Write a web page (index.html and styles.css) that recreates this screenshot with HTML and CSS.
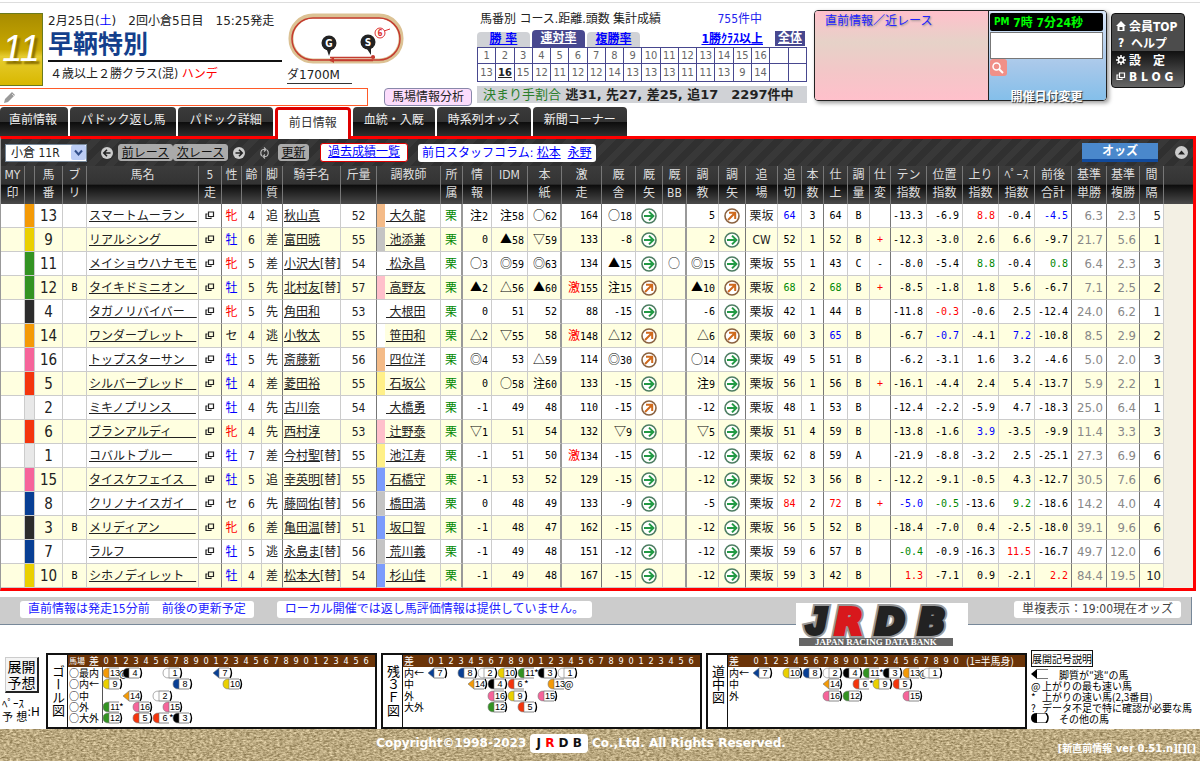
FILE: index.html
```html
<!DOCTYPE html>
<html lang="ja">
<head>
  <meta charset="UTF-8">
  <title>早鞆特別 - 前日情報</title>
  <link rel="stylesheet" href="styles.css">
</head>
<body>
  <svg class="defs" width="0" height="0" aria-hidden="true">
    <symbol id="i-flat" viewBox="0 0 16 16">
      <circle cx="8" cy="8" r="7" fill="#fff" stroke="#4d7d62" stroke-width="1.6"/>
      <path d="M3 8h9M8 3.6L12.4 8 8 12.4" fill="none" stroke="#229a45" stroke-width="2"/>
    </symbol>
    <symbol id="i-up" viewBox="0 0 16 16">
      <circle cx="8" cy="8" r="7" fill="#fff" stroke="#8a6240" stroke-width="1.6"/>
      <path d="M4 12l7-7M5 4.8h6.2V11" fill="none" stroke="#cf6a1d" stroke-width="2"/>
    </symbol>
    <symbol id="i-win" viewBox="0 0 10 9">
      <path d="M3.5 1h5v4.5h-5zM2.5 3H1v4.5h5V6.5" fill="none" stroke="currentColor" stroke-width="1.2"/>
    </symbol>
    <symbol id="i-circle-left" viewBox="0 0 12 12">
      <circle cx="6" cy="6" r="6" fill="#ccc"/>
      <path d="M9.5 6H3M6 2.8L2.8 6 6 9.2" fill="none" stroke="#222" stroke-width="1.6"/>
    </symbol>
    <symbol id="i-circle-right" viewBox="0 0 12 12">
      <circle cx="6" cy="6" r="6" fill="#ccc"/>
      <path d="M2.5 6H9M6 2.8L9.2 6 6 9.2" fill="none" stroke="#222" stroke-width="1.6"/>
    </symbol>
  </svg>

  <header class="page-head">
    <div class="race">
      <div class="race-top">
        <div class="race-no">11</div>
        <div class="race-info">
          <div class="race-date">2月25日(<span class="blue">土</span>)　2回小倉5日目　15:25発走</div>
          <h1>早鞆特別</h1>
          <div class="race-cond">４歳以上２勝クラス(混) <span class="red">ハンデ</span></div>
        </div>
        <div class="course">
          <svg width="118" height="52" viewBox="0 0 118 52">
            <rect x="4" y="3" width="110" height="45" rx="22" fill="none" stroke="#dcc294" stroke-width="5"/>
            <rect x="5" y="5" width="108" height="42" rx="21" fill="none" stroke="#c43c30" stroke-width="1.5"/>
            <path d="M43 44.500H88M43 47.500H86" stroke="#c43c30" stroke-width="1.5"/>
            <path d="M42 47l5-3v6z" fill="#c43c30"/>
            <circle cx="86" cy="44" r="2" fill="#c43c30"/>
            <path d="M42 43l-3-9h6zM84 42l-6-9 6-1z" fill="#222"/>
            <circle cx="42" cy="30" r="7.500" fill="#222"/>
            <circle cx="81" cy="29" r="7.500" fill="#222"/>
            <circle cx="93" cy="20" r="5" fill="#fff" stroke="#d33"/>
            <path d="M97 18l6-2" stroke="#d33"/>
            <text class="pin" x="42" y="34">G</text>
            <text class="pin" x="81" y="33">S</text>
            <text class="pin-no" x="93" y="23">6</text>
          </svg>
          <div class="distance">ダ1700M　</div>
        </div>
      </div>
      <div class="memo">
        <span class="memo-box">
          <svg width="14" height="14" viewBox="0 0 14 14"><path d="M1 13l1-4 7-7 3 3-7 7z" fill="#999"/><path d="M9 4l2 2" stroke="#ddd"/></svg>
          <input type="text" aria-label="メモ">
        </span>
        <button class="btn-baba" type="button">馬場情報分析</button>
      </div>
    </div>

    <section class="stats">
      <div class="stats-head"><span>馬番別 コース.距離.頭数 集計成績</span><span class="count">755件中</span></div>
      <div class="stats-tabs">
        <a href="#">勝 率</a>
        <a href="#" class="on">連対率</a>
        <a href="#">複勝率</a>
        <a href="#" class="plain">1勝ｸﾗｽ以上</a>
        <a href="#" class="all">全体</a>
      </div>
      <table class="stats-table">
        <tr><td>1</td><td>2</td><td>3</td><td>4</td><td>5</td><td>6</td><td>7</td><td>8</td><td>9</td><td>10</td><td>11</td><td>12</td><td>13</td><td>14</td><td>15</td><td>16</td><td></td><td></td></tr>
        <tr><td>13</td><td><b>16</b></td><td>15</td><td>12</td><td>11</td><td>12</td><td>12</td><td>14</td><td>13</td><td>13</td><td>13</td><td>11</td><td>11</td><td>13</td><td>9</td><td>14</td><td></td><td></td></tr>
      </table>
      <div class="kimarite"><span class="green">決まり手割合</span> 逃31, 先27, 差25, 追17　2297件中</div>
    </section>

    <section class="near">
      <div class="near-race">直前情報／近レース</div>
      <div class="near-side">
        <div class="clock"><small>PM</small> 7時 7分24秒</div>
        <input type="text" aria-label="検索">
        <button class="search" type="button" aria-label="検索する">
          <svg width="16" height="16" viewBox="0 0 16 16"><circle cx="6.500" cy="6.500" r="3.500" fill="none" stroke="#fff" stroke-width="1.500"/><path d="M9 9l4 4" stroke="#fff" stroke-width="2"/></svg>
        </button>
        <a href="#" class="change-date">開催日付変更</a>
      </div>
    </section>

    <nav class="menu">
      <a href="#"><svg width="10" height="10" viewBox="0 0 10 10"><path d="M0 5l5-5 5 5H8.500v5h-7V5zM3.500 6v3h3V6z" fill="#fff" fill-rule="evenodd"/></svg>会員TOP</a>
      <a href="#"><b>?</b>ヘルプ</a>
      <a href="#"><svg width="10" height="10" viewBox="0 0 10 10"><path d="M5 0v10M0 5h10M1.500 1.500l7 7M8.500 1.500l-7 7" stroke="#fff" stroke-width="1.500"/><circle cx="5" cy="5" r="2.500" fill="#222" stroke="#fff" stroke-width="1.500"/></svg>設　定</a>
      <a href="#"><svg width="10" height="9"><use href="#i-win"/></svg>B L O G</a>
    </nav>
  </header>

  <nav class="tabs">
    <a href="#">直前情報</a>
    <a href="#">パドック返し馬</a>
    <a href="#">パドック詳細</a>
    <a href="#" class="active">前日情報</a>
    <a href="#">血統・入厩</a>
    <a href="#">時系列オッズ</a>
    <a href="#">新聞コーナー</a>
  </nav>

  <main class="panel">
    <div class="toolbar">
      <span class="race-select">
        <select aria-label="レース選択"><option>小倉 11R</option></select>
        <svg width="15" height="15" viewBox="0 0 15 15"><rect width="15" height="15" rx="2" fill="#bccdf5"/><path d="M4 5.500l3.500 4 3.500-4" fill="none" stroke="#33508c" stroke-width="2"/></svg>
      </span>
      <span class="race-move">
        <svg width="12" height="12"><use href="#i-circle-left"/></svg>
        <span><button type="button">前レース</button><button type="button">次レース</button></span>
        <svg width="12" height="12"><use href="#i-circle-right"/></svg>
      </span>
      <svg width="11" height="12" viewBox="0 0 11 12"><path d="M6 2.500H4A2.500 3.500 0 0 0 3 9M5 9.500h2A2.500 3.500 0 0 0 8 3M5 .5l2 2-2 2M6 7.500l-2 2 2 2" fill="none" stroke="#bbb" stroke-width="1.200"/></svg>
      <button type="button" class="reload">更新</button>
      <a href="#" class="past">過去成績一覧</a>
      <span class="column">前日スタッフコラム: <a href="#">松本</a>&nbsp; <a href="#">永野</a></span>
      <button type="button" class="odds">オッズ</button>
      <svg width="13" height="13" viewBox="0 0 13 13"><circle cx="6.500" cy="6.500" r="6.500" fill="#ccc"/><path d="M3 8.500l3.500-4 3.500 4z" fill="#222"/></svg>
    </div>

    <table class="horses">
      <colgroup>
        <col class="w24"><col class="w10"><col class="w28"><col class="w24"><col class="w112"><col class="w23">
        <col class="w20"><col class="w20"><col class="w21"><col class="w58"><col class="w36"><col class="w8"><col class="w56">
        <col class="w22"><col class="w29"><col class="w36"><col class="w34"><col class="w40"><col class="w34">
        <col class="w27"><col class="w24"><col class="w32"><col class="w27"><col class="w32"><col class="w24">
        <col class="w22"><col class="w24"><col class="w22"><col class="w21">
        <col class="w36"><col class="w36"><col class="w36"><col class="w36"><col class="w37">
        <col class="w35"><col class="w33"><col class="w24"><col>
      </colgroup>
      <thead>
        <tr>
          <th>MY<br>印</th><th></th><th>馬<br>番</th><th>ブ<br>リ</th><th>馬名</th><th>5<br>走</th>
          <th>性</th><th>齢</th><th>脚<br>質</th><th>騎手名</th><th>斤量</th><th colspan="2">調教師</th>
          <th>所<br>属</th><th>情<br>報</th><th>IDM</th><th>本<br>紙</th><th>激<br>走</th><th>厩<br>舎</th>
          <th>厩<br>矢</th><th>厩<br>BB</th><th>調<br>教</th><th>調<br>矢</th><th>追<br>場</th><th>追<br>切</th>
          <th>本<br>数</th><th>仕<br>上</th><th>調<br>量</th><th>仕<br>変</th>
          <th>テン<br>指数</th><th>位置<br>指数</th><th>上り<br>指数</th><th>ﾍﾟｰｽ<br>指数</th><th>前後<br>合計</th>
          <th>基準<br>単勝</th><th>基準<br>複勝</th><th>間<br>隔</th><th></th>
        </tr>
      </thead>
      <tbody id="horses"></tbody>
    </table>
  </main>

  <div class="notice">
    <span class="chip">直前情報は発走15分前　前後の更新予定</span>
    <span class="chip">ローカル開催では返し馬評価情報は提供していません。</span>
    <span class="chip odds-time">単複表示：19:00現在オッズ</span>
    <svg class="logo" width="172" height="44" viewBox="0 0 172 44" role="img" aria-label="JRDB">
      <rect width="172" height="44" fill="#fff"/>
      <g class="logo-edge"><text class="logo-j" x="10" y="31">J</text><text x="39" y="31">R</text><text x="79" y="31">D</text><text x="122" y="31">B</text></g>
      <g class="logo-face"><text class="logo-j" x="10" y="31">J</text><text class="logo-red" x="39" y="31">R</text><text x="79" y="31">D</text><text x="122" y="31">B</text></g>
      <rect x="3" y="35" width="154" height="8" fill="#666"/>
      <text class="logo-sub" x="80" y="42">JAPAN RACING DATA BANK</text>
    </svg>
  </div>

  <section class="forecast">
    <div class="forecast-side">
      <button type="button">展開<br>予想</button>
      <div class="pace"><span>ﾍﾟｰｽ<br>予 想</span><b>:H</b></div>
    </div>
    <figure class="chart"><figcaption>ゴール図</figcaption><svg id="goal" width="307" height="72"></svg></figure>
    <figure class="chart"><figcaption>残３Ｆ図</figcaption><svg id="last3f" width="297" height="72"></svg></figure>
    <figure class="chart"><figcaption>道中図</figcaption><svg id="middle" width="297" height="72"></svg></figure>
    <div class="legend">
      <div><span class="legend-title">展開記号説明</span></div>
      <div><svg width="18" height="10"><path d="M0 5l6-5v10z"/><path d="M6 .5h11M6 9.500h11" stroke="#777"/></svg>　脚質が″逃″の馬</div>
      <div><i>@</i>上がりの最も速い馬</div>
      <div><i>*</i>上がりの速い馬(2,3番目)</div>
      <div><i>?</i>データ不足で特に確認が必要な馬</div>
      <div><svg width="18" height="10"><path d="M6 0Q0 0 0 5t6 5z"/><path d="M6 .5h9M6 9.500h9" stroke="#777"/><path d="M15 0q4 5 0 10" fill="none" stroke="#000" stroke-width="1.500"/></svg>　その他の馬</div>
    </div>
  </section>

  <footer>
    <svg class="sand" aria-hidden="true">
      <filter id="grain" x="0" y="0" width="100%" height="100%" color-interpolation-filters="sRGB">
        <feTurbulence type="fractalNoise" baseFrequency="0.3 0.6" numOctaves="3" seed="4"/>
        <feColorMatrix values="0.6 0 0 0 0.43  0.6 0 0 0 0.36  0.6 0 0 0 0.2  0 0 0 0 1"/>
      </filter>
      <rect width="100%" height="100%" filter="url(#grain)"/>
    </svg>
    <p>Copyright©1998-2023 <span class="mark-box">J <span class="red">R</span> D B</span> Co.,Ltd. All Rights Reserved.</p>
    <span class="version">[新直前情報 ver 0.51.n][][]</span>
  </footer>

  <script src="script.js"></script>
</body>
</html>
```

FILE: styles.css
```css
* {
  box-sizing: border-box;
}

body {
  margin: 0;
  background: #fff;
  color: #222;
  font-family: "DejaVu Sans Condensed", "Noto Sans CJK JP", sans-serif;
  font-size: 12px;
}

a {
  color: #00f;
}

button,
input,
select {
  font-family: inherit;
  font-size: 12px;
  margin: 0;
}

.defs {
  position: absolute;
}

.red { color: #f00; }
.blue { color: #00f; }
.green { color: #2c7f2c; }

/* header */
.page-head {
  display: flex;
  align-items: flex-start;
  height: 105px;
  margin-top: 2px;
  border-top: 1px solid #ddd;
}

.race {
  flex: 0 0 472px;
  padding-top: 10px;
}

.race-top {
  display: flex;
  height: 75px;
}

.race-no {
  width: 43px;
  height: 73px;
  border: 1px solid #6b7a1e;
  border-left: none;
  background: linear-gradient(#a88c00, #c9a800 50%, #e6cc30 60%, #d8b800);
  color: #fff;
  font: italic 36px/70px "Liberation Sans", sans-serif;
  text-align: center;
  text-shadow: 3px 3px 2px #8a7000;
}

.race-info {
  width: 234px;
  margin-left: 5px;
  white-space: nowrap;
}

.race-date,
.distance,
.kimarite {
  font-family: "DejaVu Sans", "Noto Sans CJK JP", sans-serif;
}

.race-date {
  line-height: 16px;
}

h1 {
  margin: 0;
  border-bottom: 2px solid #111;
  color: #143f8c;
  font-size: 25px;
  line-height: 31px;
}

.race-cond {
  padding-left: 2px;
  line-height: 24px;
}

.course {
  margin-left: 5px;
}

.course svg {
  display: block;
}

.distance {
  display: inline-block;
  border-bottom: 1px solid #333;
  line-height: 16px;
  margin-top: 2px;
}

.pin,
.pin-no {
  fill: #fff;
  font-size: 10px;
  font-weight: bold;
  text-anchor: middle;
}

.pin-no {
  fill: #d33;
  font-size: 8px;
}

.memo {
  display: flex;
  gap: 16px;
}

.memo-box {
  display: flex;
  flex: 1;
  height: 18px;
  border: 1px solid #ff5a28;
  border-left: none;
  padding: 1px 3px;
}

.memo-box input {
  flex: 1;
  border: none;
  background: none;
  outline: none;
}

.btn-baba {
  width: 88px;
  height: 18px;
  padding: 0;
  border: 1px solid #88a;
  border-radius: 4px;
  background: #fcdcfc;
  color: #222;
  line-height: 14px;
}

/* stats */
.stats {
  width: 330px;
  margin-left: 5px;
  padding-top: 7px;
  white-space: nowrap;
}

.stats-head {
  display: flex;
  justify-content: space-between;
  padding: 0 45px 0 3px;
  line-height: 18px;
}

.stats-head .count {
  color: #22e;
}

.stats-tabs {
  display: flex;
  align-items: flex-end;
  gap: 2px;
  height: 19px;
}

.stats-tabs a {
  width: 53px;
  border-radius: 4px 4px 0 0;
  background: #d0d2d6;
  font-weight: bold;
  line-height: 15px;
  text-align: center;
}

.stats-tabs .on {
  background: #48488f;
  color: #fff;
  line-height: 17px;
}

.stats-tabs .plain {
  width: auto;
  margin-left: auto;
  background: none;
}

.stats-tabs .all {
  width: 30px;
  margin: 0 2px 1px 10px;
  border-radius: 0;
  background: #48488f;
  color: #fff;
}

.stats-table {
  width: 100%;
  border-collapse: collapse;
  table-layout: fixed;
}

.stats-table td {
  height: 16px;
  padding: 0;
  border: 1px solid #48488f;
  color: #666;
  font-size: 11px;
  line-height: 14px;
  text-align: center;
}

.stats-table tr + tr td {
  height: 18px;
}

.stats-table b {
  color: #222;
  text-decoration: underline;
}

.kimarite {
  margin-top: 4px;
  padding-left: 6px;
  background: #d0d2d6;
  font-size: 13px;
  font-weight: bold;
  line-height: 17px;
}

.kimarite .green {
  font-weight: normal;
}

/* near race panel */
.near {
  display: flex;
  width: 293px;
  height: 91px;
  margin: 7px 0 0 7px;
  border: 1px solid #222;
  border-radius: 4px;
  box-shadow: 2px 2px 4px #999;
}

.near-race {
  flex: 1;
  padding-left: 10px;
  border-right: 1px solid #222;
  border-radius: 3px 0 0 3px;
  background: linear-gradient(#ffc0cb, #e6d2c8 35%, #f4c6c8 70%, #ffc0cb);
  color: #22f;
  line-height: 21px;
  text-shadow: 1px 1px 2px #888;
}

.near-side {
  display: flex;
  flex-direction: column;
  width: 117px;
  padding: 2px 3px 0 1px;
  border-radius: 0 3px 3px 0;
  background: linear-gradient(#d8e6fa, #a8c8ea 60%, #84bfea);
}

.clock {
  height: 18px;
  flex: none;
  padding-left: 4px;
  border-radius: 2px;
  background: #000;
  color: #0f0;
  font-weight: bold;
  line-height: 17px;
  white-space: nowrap;
}

.clock small {
  font-size: 10px;
  vertical-align: 2px;
}

.near-side input {
  width: 100%;
  height: 27px;
  flex: none;
  margin-top: 1px;
  border: 1px solid #777;
  background: #fff;
}

.search {
  width: 17px;
  height: 17px;
  flex: none;
  padding: 0;
  border: none;
  border-radius: 3px;
  background: #f09088;
}

.search svg {
  display: block;
}

.change-date {
  margin-top: 12px;
  color: #fff;
  font-weight: bold;
  line-height: 18px;
  text-align: center;
  text-decoration: none;
  text-shadow: 1px 1px 1px #333;
}

.menu {
  width: 74px;
  height: 75px;
  margin: 10px 0 0 4px;
  padding: 3px 0 0 4px;
  border: 1px solid #111;
  border-radius: 4px;
  background: linear-gradient(#4c4c4c, #4c4c4c 50%, #111 51%, #666);
}

.menu a {
  display: flex;
  align-items: center;
  gap: 3px;
  height: 17px;
  color: #fff;
  font-weight: bold;
  text-decoration: none;
  white-space: nowrap;
}

.menu b {
  width: 12px;
  padding-left: 2px;
}

/* tabs */
.tabs {
  position: relative;
  display: flex;
  gap: 2px;
  height: 29px;
}

.tabs a {
  height: 29px;
  padding: 0 11px;
  border-radius: 4px 4px 0 0;
  background: linear-gradient(#3a3a3a, #333 50%, #0c0c0c 51%, #2e2e2e);
  color: #eee;
  line-height: 27px;
  text-decoration: none;
  white-space: nowrap;
}

.tabs a:first-child {
  padding-left: 9px;
}

.tabs .active {
  height: 32px;
  border: 3px solid #d00;
  border-bottom: none;
  background: #fff;
  color: #333;
}

/* main panel */
.panel {
  margin-right: 4px;
  border: 3px solid #f00;
  border-left: 1px solid #999;
}

.toolbar {
  display: flex;
  align-items: center;
  height: 27px;
  padding: 0 5px 0 4px;
  background: repeating-linear-gradient(-45deg, #303030 0 7px, #383838 7px 14px);
}

.toolbar button {
  height: 17px;
  padding: 0 1px;
  border: 1px solid #aaa;
  border-radius: 3px;
  background: #aaa;
  color: #111;
  line-height: 14px;
  text-decoration: underline;
}

.toolbar > svg {
  margin: 0 8px 0 14px;
}

.race-select {
  position: relative;
}

.race-select select {
  display: block;
  width: 82px;
  height: 18px;
  padding: 0 5px;
  border: 1px solid #789;
  border-radius: 0;
  appearance: none;
  background: #fff;
  color: #222;
}

.race-select svg {
  position: absolute;
  top: 1px;
  right: 1px;
  pointer-events: none;
}

.race-move {
  display: flex;
  align-items: center;
  gap: 5px;
  margin-left: 14px;
}

.race-move button {
  width: 55px;
}

.toolbar .reload {
  width: 31px;
}

.toolbar .past {
  margin-left: 11px;
  padding: 0 7px;
  border: 1px solid #d00;
  border-radius: 3px;
  background: #fff;
  line-height: 17px;
}

.column {
  margin-left: 10px;
  padding: 0 4px;
  border-radius: 3px;
  background: #fff;
  color: #00f;
  line-height: 18px;
}

.toolbar .odds {
  width: 76px;
  height: 19px;
  margin-left: auto;
  border: none;
  border-bottom: 3px solid #114a9c;
  border-radius: 0;
  background: #4a88cc;
  color: #fff;
  font-weight: bold;
  text-decoration: none;
}

.toolbar .odds + svg {
  margin: 0 0 0 17px;
}

/* horse list */
.horses {
  width: 100%;
  border-collapse: separate;
  border-spacing: 0;
  table-layout: fixed;
}

.w8 { width: 8px; }
.w10 { width: 10px; }
.w20 { width: 20px; }
.w21 { width: 21px; }
.w22 { width: 22px; }
.w23 { width: 23px; }
.w24 { width: 24px; }
.w27 { width: 27px; }
.w28 { width: 28px; }
.w29 { width: 29px; }
.w32 { width: 32px; }
.w33 { width: 33px; }
.w34 { width: 34px; }
.w35 { width: 35px; }
.w36 { width: 36px; }
.w37 { width: 37px; }
.w40 { width: 40px; }
.w56 { width: 56px; }
.w58 { width: 58px; }
.w112 { width: 112px; }

.horses thead tr {
  background: linear-gradient(#3c3c3c, #333 48%, #0c0c0c 50%, #4a4a4a);
}

.horses th {
  height: 38px;
  padding: 0;
  border-right: 1px solid #777;
  color: #ddd;
  font-weight: normal;
  line-height: 18px;
  vertical-align: top;
  white-space: nowrap;
}

.horses td {
  height: 24px;
  padding: 0;
  border-right: 1px solid #ccc;
  border-bottom: 1px solid #ccc;
  line-height: 18px;
  overflow: hidden;
  text-align: center;
  white-space: nowrap;
}

.horses th:last-child {
  border-right: none;
}

.horses tbody tr:nth-child(even) {
  background: #ffffe0;
}

.horses td.edge {
  border-right-color: #777;
}

.horses td.edge2 {
  border-right: 2px solid #999;
}

.horses td.rest {
  border: none;
  background: #f3f0e4;
}

.horses a {
  color: #222;
}

.horses td svg {
  display: block;
  margin: 0 auto;
}

.horses .num { font-size: 15px; }

.horses .name {
  padding-left: 2px;
  text-align: left;
}

.horses .person {
  padding-left: 1px;
  text-align: left;
}

.horses .strip {
  border-right: none;
}

.horses .mono {
  color: #000;
  font-family: "DejaVu Sans Mono", "Noto Sans CJK JP", monospace;
  font-size: 10px;
}

.horses .r {
  padding-right: 3px;
  text-align: right;
}

.horses .odd {
  padding-right: 3px;
  color: #888;
  font-size: 13px;
  text-align: right;
}

.horses .gap {
  padding-right: 2px;
  font-size: 13px;
  text-align: right;
}

.mark {
  font-family: "Noto Sans CJK JP", sans-serif;
  font-size: 12px;
}

.c-r, .horses .c-r { color: #f00; }
.c-g, .horses .c-g { color: #080; }
.c-b, .horses .c-b { color: #00f; }

.waku1 { background: #e8e8e8; }
.waku2 { background: #2c2c2c; }
.waku3 { background: #f4350c; }
.waku4 { background: #083f94; }
.waku5 { background: #ead000; }
.waku6 { background: #339322; }
.waku7 { background: #f49a06; }
.waku8 { background: #f6649a; }

.s-orange { background: #f4bb88; }
.s-gray { background: #c4c4c4; }
.s-pink { background: #ffc0cb; }
.s-yellow { background: #fff088; }
.s-blue { background: #7c9cfc; }
.s-none { background: #fff; }

/* notice bar */
.notice {
  position: relative;
  display: flex;
  align-items: center;
  height: 28px;
  margin: 6px 8px 0 0;
  padding: 0 10px 2px 20px;
  border-right: 1px solid #789;
  border-bottom: 1px solid #789;
  background: #ccc;
}

.chip {
  margin-right: 23px;
  padding: 0 8px;
  border-radius: 3px;
  background: #fff;
  color: #22f;
  line-height: 17px;
}

.odds-time {
  margin: 0 0 0 auto;
  color: #444;
}

.logo {
  position: absolute;
  top: 6px;
  right: 223px;
}

.logo text {
  font-family: "DejaVu Sans", sans-serif;
  font-size: 36px;
  font-style: italic;
  font-weight: bold;
}

.logo .logo-j {
  font-family: "Liberation Sans", sans-serif;
}

.logo-edge text {
  fill: #aaa;
  stroke: #999;
  stroke-width: 8px;
}

.logo-face text {
  fill: #222;
  stroke: #222;
  stroke-width: 4px;
}

.logo-face .logo-red {
  fill: #d8181c;
  stroke: #d8181c;
}

.logo .logo-sub {
  fill: #fff;
  font-family: "Liberation Serif", serif;
  font-size: 9px;
  font-style: normal;
  text-anchor: middle;
}

/* forecast */
.forecast {
  display: flex;
  gap: 4px;
  margin-top: 28px;
  color: #000;
}

.forecast-side {
  width: 42px;
}

.forecast-side button {
  display: block;
  width: 34px;
  height: 36px;
  margin: 4px 0 0 5px;
  padding: 0;
  border: 1px solid #ccc;
  border-right: 2px solid #222;
  border-bottom: 2px solid #222;
  background: #f4f4f4;
  color: #000;
  font-size: 14px;
  line-height: 16px;
}

.pace {
  display: flex;
  align-items: center;
  margin: 5px 0 0 2px;
  font-size: 11px;
  line-height: 13px;
  white-space: nowrap;
}

.pace b {
  font-size: 13px;
  font-weight: normal;
}

.chart {
  display: flex;
  height: 76px;
  margin: 0;
  border: 2px solid #111;
}

.chart figcaption {
  width: 20px;
  padding: 10px 0 0;
  border-right: 1px solid #111;
  font-family: "Noto Sans CJK JP", sans-serif;
  font-size: 13px;
  line-height: 18px;
  text-orientation: upright;
  writing-mode: vertical-rl;
}

.chart text {
  font-family: "Noto Sans CJK JP", sans-serif;
  font-size: 10px;
}

.chart .scale {
  fill: #fff;
  font-family: "DejaVu Sans Condensed", sans-serif;
  font-size: 9px;
  text-anchor: middle;
}

.chart .scale-jp {
  fill: #fff;
}

.chart .scale-small {
  fill: #fff;
  font-size: 8px;
}

.chart .pip {
  font-family: "Liberation Sans", sans-serif;
  font-size: 9px;
  text-anchor: middle;
}

.legend {
  font: 10px/11px "Noto Sans CJK JP", sans-serif;
  white-space: nowrap;
}

.legend > div {
  height: 11px;
}

.legend > div:first-child {
  height: 16px;
}

.legend svg {
  vertical-align: top;
}

.legend i {
  display: inline-block;
  width: 11px;
  font-style: normal;
}

.legend-title {
  border: 1px solid #111;
}

/* footer */
footer {
  position: relative;
  display: flex;
  align-items: center;
  justify-content: center;
  height: 32px;
  background: #c2b284;
  color: #fff;
  font-family: "DejaVu Sans", "Noto Sans CJK JP", sans-serif;
  font-weight: bold;
}

.sand {
  position: absolute;
  width: 100%;
  height: 100%;
}

footer p {
  position: relative;
  margin: 0 38px 4px 0;
}

.mark-box {
  display: inline-block;
  padding: 0 6px;
  border-radius: 4px;
  background: #fff;
  color: #111;
  line-height: 19px;
}

.version {
  position: absolute;
  right: 4px;
  bottom: 6px;
  font-size: 10px;
}
```

FILE: script.js
```js
// 馬番|ブリ|馬名|性|齢|脚質|騎手|替|斤量|調教師色|調教師|情報|IDM|本紙|激走|厩舎|厩矢|BB|調教|調矢|追場|追切|本数|仕上|調量|仕変|テン|位置|上り|ペース|合計|単勝|複勝|間隔
const rows = `
13||スマートムーラン|牝|4|追|秋山真||52|orange|大久龍|注2|注58|○62|164|○18|→||5|↑|栗坂|b64|3|64|B||-13.3|-6.9|r8.8|-0.4|b-4.5|6.3|2.3|5
9||リアルシング|牡|6|差|富田暁||55|gray|池添兼|0|▲58|▽59|133|-8|→||2|→|CW|52|1|52|B|+|-12.3|-3.0|2.6|6.6|-9.7|21.7|5.6|1
11||メイショウハナモモ|牝|5|差|小沢大|替|54||松永昌|○3|◎59|◎63|134|▲15|→|○|◎15|→|栗坂|55|1|43|C|-|-8.0|-5.4|g8.8|-0.4|g0.8|6.4|2.3|3
12|B|タイキドミニオン|牡|5|先|北村友|替|57|pink|高野友|▲2|△56|▲60|激155|注15|↑||▲10|↑|栗坂|g68|2|g68|B|+|-8.5|-1.8|1.8|5.6|-6.7|7.1|2.5|2
4||タガノリバイバー|牝|5|先|角田和||53||大根田|0|51|52|88|-15|→||-6|→|栗坂|42|1|44|B||-11.8|r-0.3|-0.6|2.5|-12.4|24.0|6.2|1
14||ワンダーブレット|セ|4|逃|小牧太||55|none|笹田和|△2|▽55|58|激148|△12|↑||△6|↑|栗坂|60|3|b65|B||-6.7|b-0.7|-4.1|b7.2|-10.8|8.5|2.9|2
16||トップスターサン|牡|5|先|斎藤新||56|orange|四位洋|◎4|53|△59|114|◎30|↑||○14|→|栗坂|49|5|51|B||-6.2|-3.1|1.6|3.2|-4.6|5.0|2.0|3
5||シルバーブレッド|牡|4|差|菱田裕||55|yellow|石坂公|0|○58|注60|133|-15|→||注9|→|栗坂|56|1|56|B|+|-16.1|-4.4|2.4|5.4|-13.7|5.9|2.2|1
2||ミキノプリンス|牡|4|先|古川奈||54||大橋勇|-1|49|48|110|-15|↑||-12|→|栗坂|48|1|53|B||-12.4|-2.2|-5.9|4.7|-18.3|25.0|6.4|1
6||ブランアルディ|牝|4|先|西村淳||53|pink|辻野泰|▽1|51|54|132|▽9|→||▽5|→|栗坂|51|4|59|B||-13.8|-1.6|b3.9|-3.5|-9.9|11.4|3.3|3
1||コバルトブルー|牡|7|差|今村聖|替|55|yellow|池江寿|-1|51|50|激134|-15|→||-12|→|栗坂|62|8|59|A||-21.9|-8.8|-3.2|2.5|-25.1|27.3|6.9|6
15||タイスケフェイス|牡|5|追|幸英明|替|55|blue|石橋守|-1|53|52|129|-15|→||-12|→|栗坂|52|3|56|B|-|-12.2|-9.1|-0.5|4.3|-12.7|30.5|7.6|6
8||クリノナイスガイ|セ|6|先|藤岡佑|替|56|gray|橋田満|0|48|49|133|-9|→||-5|→|栗坂|r84|2|r72|B|+|b-5.0|g-0.5|-13.6|g9.2|-18.6|14.2|4.0|4
3|B|メリディアン|牝|6|差|亀田温|替|51|blue|坂口智|-1|48|47|162|-15|→||-12|→|栗坂|56|5|52|B||-18.4|-7.0|0.4|-2.5|-18.0|39.1|9.6|6
7||ラルフ|牡|5|逃|永島ま|替|56|gray|荒川義|-1|49|48|151|-12|→||-12|→|栗坂|59|6|57|B||g-0.4|-0.9|-16.3|r11.5|-16.7|49.7|12.0|6
10|B|シホノディレット|牡|4|差|松本大|替|54|blue|杉山佳|-1|49|48|167|-15|→||-12|→|栗坂|59|3|42|B||r1.3|-7.1|0.9|-2.1|r2.2|84.4|19.5|10
`.trim().split("\n").map(line => line.split("|"));

const td = (cls, html) => `<td class="${cls}">${html}</td>`;

// 先頭の r/g/b は文字色
function num(cls, v) {
  const m = v.match(/^([rgb])(.+)$/);
  return m ? td(`${cls} c-${m[1]}`, m[2]) : td(cls, v);
}

// 印は全角フォントで表示
function marked(cls, v) {
  return td(cls, v.replace(/^[^\d-]/, c => `<span class="mark${c === "激" ? " c-r" : ""}">${c}</span>`));
}

const arrow = v => `<svg width="16" height="16"><use href="#${v === "→" ? "i-flat" : "i-up"}"/></svg>`;

document.getElementById("horses").innerHTML = rows.map(r => {
  const sex = { "牝": "c-r", "牡": "c-b" }[r[3]] || "";
  return "<tr>" +
    td("", "") +
    td("waku" + Math.ceil(r[0] / 2), "") +
    td("num", r[0]) +
    td("mono", r[1]) +
    td("name", `<a href="#">${r[2].padEnd(9, "　")}</a>`) +
    td("edge", '<svg width="10" height="9"><use href="#i-win"/></svg>') +
    td(sex, r[3]) +
    td("", r[4]) +
    td("edge", r[5]) +
    td("person", `<a href="#">${r[6]}</a>${r[7] ? "[" + r[7] + "]" : ""}`) +
    td("edge", r[8]) +
    td("strip s-" + r[9], "") +
    td("person", `<a href="#">&nbsp;${r[10]}</a>`) +
    td("edge2 c-g", "栗") +
    marked("mono r", r[11]) +
    marked("mono r", r[12]) +
    marked("mono r edge2", r[13]) +
    marked("mono r edge", r[14]) +
    marked("mono r", r[15]) +
    td("", arrow(r[16])) +
    marked("edge2", r[17]) +
    marked("mono r", r[18]) +
    td("edge", arrow(r[19])) +
    td("", r[20]) +
    num("mono", r[21]) +
    td("mono edge", r[22]) +
    num("mono", r[23]) +
    td("mono", r[24]) +
    td("mono edge" + (r[25] === "+" ? " c-r" : ""), r[25]) +
    num("mono r", r[26]) +
    num("mono r", r[27]) +
    num("mono r", r[28]) +
    num("mono r", r[29]) +
    num("mono r edge", r[30]) +
    td("odd edge", r[31]) +
    td("odd edge", r[32]) +
    td("gap", r[33]) +
    td("rest", "") +
    "</tr>";
}).join("");

// 展開図
const wakuColor = ["#fff", "#000", "#f4350c", "#083f94", "#ead000", "#339322", "#f49a06", "#f6649a"];
const rowY = [18, 29, 41, 52, 63];
const nige = [7, 14];

function pip(x, y, label) {
  const no = parseInt(label);
  const suffix = label.replace(/\d+/, "");
  const head = nige.includes(no) ? "M0 0L6 -5V5z" : "M6 -5Q0 -5 0 0T6 5z";
  return `<g transform="translate(${x} ${y})">
    <path d="${head}" fill="${wakuColor[Math.ceil(no / 2) - 1]}" stroke="#777" stroke-width="0.6"/>
    <path d="M6 -5H16M6 5H16" stroke="#888"/>
    ${suffix ? `<text x="16" y="4">${suffix}</text>` : '<path d="M17 -5Q20 0 17 5" fill="none" stroke="#000" stroke-width="1.4"/>'}
    <text class="pip" x="12" y="3">${no}</text>
  </g>`;
}

function drawChart(id, zero, count, head, labels, lines) {
  let out = `<rect width="100%" height="12" fill="#6b3408"/>${head}`;
  for (let i = 0; i < count; i++) {
    out += `<text class="scale" x="${zero + 3 + i * 10}" y="9">${i % 10}</text>`;
  }
  labels.forEach((label, i) => {
    out += `<text x="1" y="${rowY[i] + 4}">${label}</text>`;
  });
  lines.forEach((line, i) => {
    line.forEach(([pos, label]) => {
      out += pip(zero + pos * 10, rowY[i], label);
    });
  });
  document.getElementById(id).innerHTML = out;
}

drawChart("goal", 35, 27,
  '<text class="scale-small" x="1" y="9">馬場</text><text class="scale-jp" x="21" y="10">差</text><path d="M34.500 12v56" stroke="#555"/>',
  ["○最内", "○内←", "○中", "○外", "○大外"],
  [
    [[0, "13@"], [2, "4"], [6, "1"], [11, "7"]],
    [[0, "9"], [7, "8"], [12, "10"]],
    [[2, "14"], [5, "2"]],
    [[0, "11*"], [3, "16"], [6, "15"]],
    [[0, "12"], [3, "5"], [5, "6*"], [7, "3"]]
  ]);

drawChart("last3f", 25, 27,
  '<text class="scale-jp" x="1" y="10">差</text>',
  ["内←", "中", "外", "大外"],
  [
    [[0, "7"], [3, "8"], [5, "2"], [7, "10"], [9, "11*"], [11, "3"], [13, "1"]],
    [[4, "14"], [6, "4"], [8, "6*"], [12, "13@"]],
    [[6, "16"], [8, "9"], [11, "15"]],
    [[6, "12"], [9, "5"]]
  ]);

drawChart("middle", 25, 21,
  '<text class="scale-jp" x="1" y="10">差</text><text class="scale-jp" x="238" y="10">(1=半馬身)</text>',
  ["内←", "中", "外"],
  [
    [[0, "7"], [3, "10"], [5, "8"], [7, "2"], [9, "4"], [11, "11*"], [13, "3"], [15, "13@"], [17, "1"]],
    [[7, "14"], [10, "6*"], [12, "9"], [14, "5"]],
    [[7, "16"], [9, "12"], [15, "15"]]
  ]);
```
